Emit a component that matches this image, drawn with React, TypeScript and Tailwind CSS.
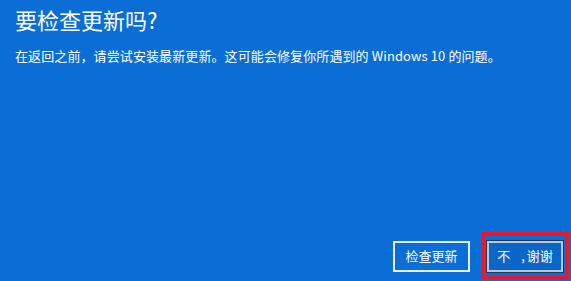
import React from "react";

export default function App() {
  return (
    <div
      className="w-[571px] h-[281px] bg-[#0a6ed6] text-white flex flex-col overflow-hidden"
      style={{ fontFamily: '"Microsoft YaHei", "Noto Sans CJK SC", "Noto Sans", sans-serif' }}
    >
      <div className="pl-[15px] pt-[4px] text-[22px] leading-[30px] text-white">要检查更新吗?</div>
      <div className="pl-[15px] pt-[13px] text-[13px] leading-[18px] tracking-[0.1px] text-white">
        在返回之前，请尝试安装最新更新。这可能会修复你所遇到的 Windows 10 的问题。
      </div>
      <div className="flex-1" />
      <div className="flex items-center justify-end gap-[11px] pr-[2px] pb-[1px]">
        <button className="w-[77px] h-[31px] border-2 border-[#e6eef8] bg-[#0a6ed6] text-[13px] text-white flex items-center justify-center">
          检查更新
        </button>
        <div className="border-[4px] border-[#e8192c] p-[2px] h-[48px] flex items-center">
          <button className="w-[76px] h-[31px] border-2 border-[#b9c6d4] outline outline-1 outline-[#1b3a5c] bg-[#0a66c8] text-[13px] text-white flex items-center justify-center">
            <span>不</span>
            <span className="ml-[11px] mr-[2px]">,</span>
            <span>谢谢</span>
          </button>
        </div>
      </div>
    </div>
  );
}
